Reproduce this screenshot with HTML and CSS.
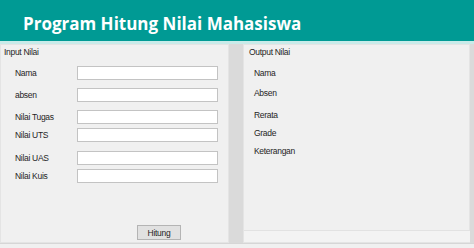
FILE: index.html
```html
<!DOCTYPE html>
<html lang="en">

<head>
    <meta charset="UTF-8">
    <meta name="viewport" content="width=device-width, initial-scale=1.0">
    <title>Program Hitung Nilai Mahasiswa</title>
    <link rel="stylesheet" href="styles.css">
</head>

<body>
    <div class="header">
        <h1>Program Hitung Nilai Mahasiswa</h1>
    </div>

    <div class="main">
        <div class="panel input-panel">
            <div class="panel-title">Input Nilai</div>
            <div class="form-rows">
                <div class="row gap-8"><label>Nama</label><input type="text"></div>
                <div class="row gap-8"><label>absen</label><input type="text"></div>
                <div class="row gap-4"><label>Nilai Tugas</label><input type="text"></div>
                <div class="row gap-9"><label>Nilai UTS</label><input type="text"></div>
                <div class="row gap-4"><label>Nilai UAS</label><input type="text"></div>
                <div class="row"><label>Nilai Kuis</label><input type="text"></div>
            </div>
            <div class="actions">
                <button type="button">Hitung</button>
            </div>
        </div>

        <div class="divider"></div>

        <div class="panel output-panel">
            <div class="panel-title">Output Nilai</div>
            <div class="output-rows">
                <div class="out">Nama</div>
                <div class="out">Absen</div>
                <div class="out">Rerata</div>
                <div class="out">Grade</div>
                <div class="out">Keterangan</div>
            </div>
            <div class="status-strip"></div>
        </div>

        <div class="edge"></div>
    </div>
</body>

</html>
```

FILE: styles.css
```css
* {
    margin: 0;
    padding: 0;
    box-sizing: border-box;
}

body {
    width: 474px;
    height: 248px;
    overflow: hidden;
    background: #f0f0f0;
    font-family: "Liberation Sans", Arial, sans-serif;
    font-size: 8.5px;
    letter-spacing: -0.3px;
    color: #1e1e1e;
}

.header {
    height: 44px;
    background: #009a94;
    border-bottom: 3px solid #c9ebe9;
    padding-left: 23px;
    padding-top: 15px;
}

.header h1 {
    font-family: "Open Sans", sans-serif;
    font-weight: bold;
    font-size: 17px;
    letter-spacing: 0;
    color: #ffffff;
    line-height: 17px;
}

.main {
    display: flex;
    height: 200px;
    border-bottom: 1px solid #d6d6d6;
}

.panel {
    display: flex;
    flex-direction: column;
    background: #f0f0f0;
    border: 1px solid #e4e4e4;
}

.input-panel {
    width: 229px;
    padding: 2px 0 0 3px;
}

.panel-title {
    height: 12px;
    line-height: 11px;
}

.form-rows {
    padding: 7px 10px 0 11px;
}

.row {
    display: flex;
    align-items: center;
    height: 14px;
}

.row.gap-4 {
    margin-bottom: 4px;
}

.row.gap-8 {
    margin-bottom: 8px;
}

.row.gap-9 {
    margin-bottom: 9px;
}

.row label {
    width: 63px;
}

.row input {
    width: 141px;
    height: 14px;
    border: 1px solid #c3c3c3;
    background: #ffffff;
    outline: none;
}

.actions {
    margin-top: auto;
    display: flex;
    padding: 0 0 2px 133px;
}

.actions button {
    width: 44px;
    height: 15px;
    font-family: inherit;
    font-size: 8.5px;
    letter-spacing: -0.3px;
    color: #1e1e1e;
    background: #e1e1e1;
    border: 1px solid #b4b4b4;
}

.divider {
    width: 14px;
    background: #dadada;
}

.output-panel {
    width: 227px;
    padding: 2px 0 0 5px;
}

.output-rows {
    padding: 8px 0 0 5px;
    flex: 1;
}

.out {
    height: 20px;
    line-height: 12px;
}

.out:nth-child(2) {
    height: 22px;
}

.out:nth-child(3),
.out:nth-child(4) {
    height: 18px;
}

.status-strip {
    height: 12px;
    margin: 0 -1px 0 -5px;
    border-top: 1px solid #e2e2e2;
    background: #f3f3f3;
}

.edge {
    flex: 1;
    background: #dadada;
}
```
